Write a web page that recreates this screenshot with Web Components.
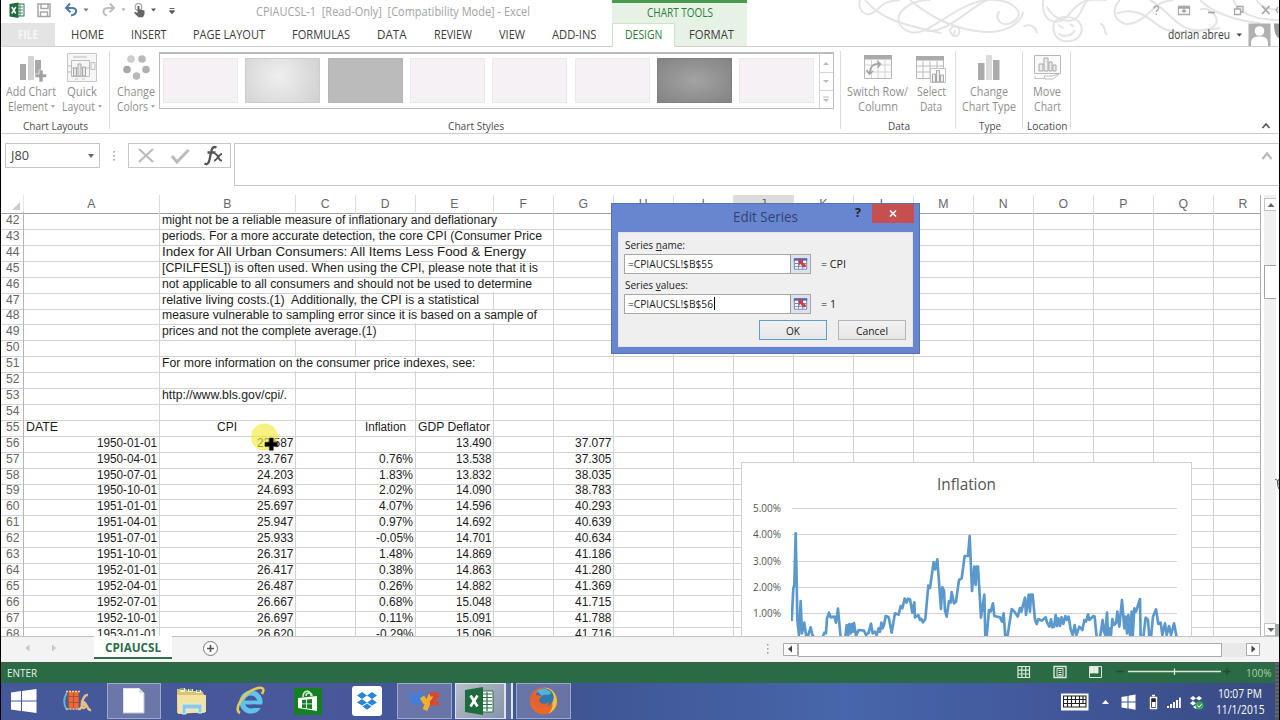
<!DOCTYPE html>
<html lang="en">
<head>
<meta charset="utf-8">
<title>CPIAUCSL-1 - Excel</title>
<style>
html,body{margin:0;padding:0;width:1280px;height:720px;overflow:hidden;background:#fff}
</style>
</head>
<body>
<excel-desktop></excel-desktop>
<script>
const define = (name, css, html, after) => {
  customElements.define(name, class extends HTMLElement {
    connectedCallback() {
      if (this.shadowRoot) return;
      const root = this.attachShadow({mode: 'open'});
      const body = typeof html === 'function' ? html(this) : html;
      root.innerHTML = '<style>*{box-sizing:border-box}' + css + '</style>' + body;
      if (after) after(this, root);
    }
  });
};

/* Text run condensed or widened to a known width */
define('fit-text',
  ':host{display:inline-block;flex:none;white-space:pre;text-align:left}span{display:inline-block;transform-origin:0 50%}',
  '<span><slot></slot></span>',
  (el, root) => {
    const w = parseFloat(el.getAttribute('w'));
    const s = root.querySelector('span');
    const n = s.getBoundingClientRect().width;
    el.style.width = w + 'px';
    if (n) s.style.transform = 'scaleX(' + (w / n) + ')';
  });
const T = (w, s) => `<fit-text w="${w}">${s}</fit-text>`;

/* ---------- title bar ---------- */
define('title-bar', `
:host{display:flex;height:23px;color:#a3a3a3;font-size:12px;line-height:23px;position:relative}
svg{display:block;flex:none}
.title{margin-left:71px}
.tools{margin-left:82px;width:135px;height:23px;background:#e5f2e4;border-top:3px solid #4a9a4e;color:#2e7a3c;line-height:19px;display:flex;justify-content:center}
.win{margin-left:398px}
`, `
<svg width="184" height="23" viewBox="1 0 184 23">
 <rect x="14" y="4" width="10" height="12" fill="#fff" stroke="#2d7447"/><path d="M17 7h6M17 10h6M17 13h6M20 4v12" stroke="#2d7447" stroke-width=".8"/>
 <path d="M9.500 4l9-1.400v15.300l-9-1.400z" fill="#1f6b3e"/><path d="M11.800 7l4 6.500M15.800 7l-4 6.500" stroke="#fff" stroke-width="1.500"/>
 <g fill="none" stroke="#a6a6a6" stroke-width="1.500"><path d="M38 4h12v12.500H38zM41 4v4.500h7V4M40.500 16v-4h7v4"/></g>
 <path d="M70 3.500L66 8l4.500 4.200M66.500 8H72c6 0 5.500 6.500-1 7.500" fill="none" stroke="#4a7aa5" stroke-width="2"/>
 <path d="M83.500 8.500h5l-2.500 3z" fill="#777"/>
 <path d="M110 3.500l4 4.500-4.500 4.200M113.500 8H108c-6 0-5.500 6.500-1 7.500" fill="none" stroke="#bdbdbd" stroke-width="2"/>
 <path d="M121.500 8.500h4l-2 2.500z" fill="#aaa"/>
 <circle cx="138.500" cy="7" r="3.300" fill="none" stroke="#aaa" stroke-width="1.300"/>
 <path d="M137.500 6v7l-3-1.500v2l4 3.800h4.500l1.500-3v-3.800l-5-1V6z" fill="#666"/>
 <path d="M151 8.500h5l-2.500 3z" fill="#555"/>
 <path d="M169.500 8.500h5M169.500 10.800h5l-2.500 3z" fill="#555" stroke="#555" stroke-width=".9"/>
</svg>
<span class="title">${T(274, 'CPIAUCSL-1  [Read-Only]  [Compatibility Mode] - Excel')}</span>
<span class="tools">${T(66, 'CHART TOOLS')}</span>
<svg class="win" width="134" height="23" viewBox="1145 0 134 23" fill="none" stroke="#a8a8a8" stroke-width="1.300">
 <path d="M1154 8.500c0-3.500 5-3 4.500 0-.3 1.700-2.200 1.800-2.200 3.500M1156.300 13.500v1.500" stroke-width="1.500"/>
 <path d="M1178.500 6.500h11v8h-11zM1178.500 8h11M1184 13V9.500M1182 11.500l2-2 2 2"/>
 <path d="M1208 12.500h7" stroke-width="1.800"/>
 <path d="M1234.500 9h6v5.500h-6zM1237 9V6.500h6v5.500h-2.500"/>
 <path d="M1262 6l7.500 8M1269.500 6l-7.500 8" stroke-width="1.800"/><path d="M1278 7l-2 3 2 3"/>
</svg>`);

/* ---------- ribbon tabs ---------- */
define('ribbon-tabs', `
:host{display:flex;height:24px;border-bottom:1px solid #cfcfcf;font-size:12px;line-height:24px;color:#3c3c3c;position:relative}
.file{width:54px;background:#e4e4e4;color:#f7f7f7;text-align:center;font-weight:bold;height:23px}
.tabs{display:flex;gap:27px;margin-left:16px;width:541px}
.design{width:63px;height:24px;background:#fff;border:1px solid #cde3cc;border-bottom:0;color:#2e7a3c;line-height:22px;text-align:center;margin-left:1px}
.format{width:72px;height:23px;background:#e5f2e4;text-align:center}
.user{margin-left:421px}
svg{display:block;flex:none}
.avatar{margin-left:4px}
`, `
<span class="file">${T(20, 'FILE')}</span>
<span class="tabs">${[['HOME',33],['INSERT',35.500],['PAGE LAYOUT',72],['FORMULAS',58],['DATA',29.500],['REVIEW',38],['VIEW',26],['ADD-INS',44.500]].map(a => T(a[1], a[0])).join('')}</span>
<span class="design">${T(37.5, 'DESIGN')}</span><span class="format">${T(45, 'FORMAT')}</span>
<span class="user">${T(62, 'dorian abreu')}</span>
<svg class="avatar" width="45" height="23" viewBox="1234 23 45 23"><path d="M1236.500 33.500h5.500l-2.700 3z" fill="#444"/><rect x="1248.500" y="23.500" width="22" height="22.500" fill="#b0b0b0"/><circle cx="1259.500" cy="31" r="4.800" fill="#fff"/><path d="M1251 46v-3c0-5 3-6.500 8.500-6.500s8.500 1.500 8.500 6.500v3z" fill="#fff"/><path d="M1274 23.500h5V38c-3-1-5-6-5-14.500z" fill="#999"/></svg>`);

/* ---------- ribbon ---------- */
define('ribbon-button', `
:host{display:flex;flex-direction:column;align-items:center;flex:none;color:#8f8f8f;font-size:12px;line-height:16px}
svg{display:block;width:36px;height:32px}
.l{height:15px;display:flex;align-items:center}
.l i{border:3px solid transparent;border-top-color:#aaa;border-bottom:0;border-left-width:2.500px;border-right-width:2.500px;margin-left:3px}
`, el => {
  const [a, aw, b, bw] = el.getAttribute('lines').split('|');
  return `<svg viewBox="0 0 36 32">${icons[el.getAttribute('icon')]}</svg><span class="l">${T(aw, a)}</span><span class="l">${T(bw, b)}${el.hasAttribute('menu') ? '<i></i>' : ''}</span>`;
}, el => { el.style.width = el.getAttribute('width') + 'px'; });

const icons = {
  add: '<path d="M7 12h6v16H7z" fill="#a8a8a8"/><path d="M15 4h6v24h-6z" fill="#d2d2d2"/><path d="M22 8h6v14h-6z" fill="#a8a8a8"/><path d="M26 18h4v4h3.500v3.500H30V30h-4v-4.500h-4V22h4z" fill="#a2a2a2" stroke="#fff" stroke-width=".6"/>',
  quick: '<path d="M3.500 1.500h29v28h-29z" fill="#f6f6f6" stroke="#c8c8c8"/><path d="M9 5h14" stroke="#bbb"/><path d="M7.500 8.500h18v16h-18zM27 10.500h4v7h-4zM4 14h3M4 20h3M8 16h17" fill="none" stroke="#bcbcbc"/><path d="M11 27h3M18 27h3" stroke="#c8c8c8"/><path d="M9.500 16h3v8h-3zM14 12h3v12h-3zM18.500 15h3v9h-3z" fill="#e8e8e8" stroke="#a8a8a8"/>',
  colors: '<circle cx="13" cy="7" r="3.800" fill="#cdcdcd"/><circle cx="24" cy="7" r="3.800" fill="#b8b8b8"/><circle cx="9" cy="17.500" r="3.800" fill="#a8a8a8"/><circle cx="28" cy="17.500" r="3.800" fill="#b0b0b0"/><circle cx="18.500" cy="24" r="3.800" fill="#b8b8b8"/>',
  sw: '<path d="M4.500 3.500h27v23h-27z" fill="#fbfbfb" stroke="#b8b8b8"/><path d="M4 3h28v4.500H4z" fill="#aaa"/><path d="M5 13h26M5 20h26M11.500 8v18M18 8v18M25 8v18" stroke="#d3d3d3"/><path d="M17 9l3.500 3-3 3.500M20 12c-7-1-10 3-10.500 9M6.500 18l3 4 3.500-3" fill="none" stroke="#a2a2a2" stroke-width="1.600"/>',
  select: '<path d="M3.500 4.500h27v22h-27z" fill="#fbfbfb" stroke="#b8b8b8"/><path d="M3 4h28v4.500H3z" fill="#aaa"/><path d="M4 14h26M4 20h26M10 9v17M17 9v17M24 9v17" stroke="#bdbdbd"/><path d="M17.500 16.500h15v14h-15z" fill="#fff" stroke="#c4c4c4"/><path d="M19.500 22h3v8h-3zM23.500 18.500h3V30h-3zM27.500 23h3v7h-3z" fill="#eee" stroke="#a8a8a8"/>',
  type: '<path d="M7 11h6.500v17H7z" fill="#ababab"/><path d="M15 3h6v25h-6z" fill="#dcdcdc"/><path d="M22 8h6.500v20H22z" fill="#ababab"/>',
  move: '<path d="M5.500 3.500h26v18h-26z" fill="#fafafa" stroke="#b8b8b8"/><path d="M10 12h4v7h-4zM15 6h4v13h-4zM20 10h3v9h-3zM24 13h3v6h-3z" fill="#eee" stroke="#aaa"/><path d="M6 24v2.500h9M15 24h8l7-2-6 5h-8z" fill="#fff" stroke="#bdbdbd"/>'
};

define('ribbon-group', `
:host{display:flex;flex-direction:column;flex:none;position:relative}
:host::after{content:"";position:absolute;right:0;top:4px;height:78px;width:1px;background:#dedede}
.items{display:flex;height:71px;padding-top:5px}
.label{font-size:11px;line-height:15px;text-align:center;color:#4c4c4c;height:15px}
`, el => `<div class="items"><slot></slot></div><div class="label">${T(el.getAttribute('lw'), el.getAttribute('label'))}</div>`,
el => { el.style.width = el.getAttribute('width') + 'px'; });

define('style-gallery', `
:host{display:flex;width:675px;height:57px;border:1px solid #bcbcbc;border-top-width:2px;padding:4px 0 0 3px;margin-left:-2px}
.t{display:flex;gap:7.350px;width:658px}
i{width:75px;height:45px;background:#f5f1f4;border:1px solid #ece9eb;flex:none}
.r{background:radial-gradient(circle at 45% 40%,#efefef,#d0d0d0);border-color:#ccc}.g{background:#bbb;border-color:#b4b4b4}.d{background:radial-gradient(#a3a3a3,#838383);border-color:#808080}
svg{width:14px;height:54px;margin-top:-4px;display:block;flex:none}
`, `<span class="t"><i></i><i class="r"></i><i class="g"></i><i></i><i></i><i></i><i class="d"></i><i></i></span>
<svg viewBox="0 0 14 54"><path d="M.5 0v54M0 18.500h14M0 36.500h14" stroke="#d4d4d4" fill="none"/><path d="M4 11l3-3 3 3zM4 26l3 3 3-3zM4 45l3 3 3-3z" fill="#bbb"/><path d="M4 43h6" stroke="#bbb"/></svg>`);

define('excel-ribbon', `
:host{display:flex;height:87px;border-bottom:1px solid #cfcfcf}
.c{margin-left:190px;width:10px}
`, `
<ribbon-group width="109" label="Chart Layouts" lw="65"><ribbon-button width="60" icon="add" lines="Add Chart|50|Element|40" menu></ribbon-button><ribbon-button width="42" icon="quick" lines="Quick|30|Layout|33" menu></ribbon-button></ribbon-group>
<ribbon-group width="731" label="Chart Styles" lw="56"><ribbon-button width="51" icon="colors" lines="Change|38|Colors|31" menu></ribbon-button><style-gallery></style-gallery></ribbon-group>
<ribbon-group width="115" label="Data" lw="22"><ribbon-button width="73" icon="sw" lines="Switch Row/|61|Column|40"></ribbon-button><ribbon-button width="34" icon="select" lines="Select|29|Data|22"></ribbon-button></ribbon-group>
<ribbon-group width="67" label="Type" lw="22"><ribbon-button width="66" icon="type" lines="Change|38|Chart Type|54"></ribbon-button></ribbon-group>
<ribbon-group width="48" label="Location" lw="40.5"><ribbon-button width="48" icon="move" lines="Move|28|Chart|27"></ribbon-button></ribbon-group>
<svg class="c" width="10" height="87" viewBox="0 0 10 87"><path d="M1.500 81l3.500-4 3.500 4" fill="none" stroke="#555" stroke-width="1.700"/></svg>`);

/* ---------- formula bar ---------- */
define('formula-bar', `
:host{display:flex;height:61px;padding:9px 0 0 4px;font-size:12px;color:#444}
.name{width:95px;height:25px;border:1px solid #c6c6c6;padding:0 5px 0 5px;display:flex;align-items:center;justify-content:space-between}
.name i{border:3.500px solid transparent;border-top:4px solid #666;border-bottom:0;margin-right:0}
.fx{width:103px;height:25px;border:1px solid #c6c6c6}
.in{flex:1;height:43px;border:1px solid #c6c6c6;border-right:0;margin-left:3px;display:flex;justify-content:flex-end}
svg{display:block;flex:none}
`, `<span class="name">${T(18, 'J80')}<i></i></span>
<svg width="28" height="25" viewBox="0 0 28 25" fill="#999"><path d="M13.300 8h1.500v1.500h-1.500zM13.300 12h1.500v1.500h-1.500zM13.300 16h1.500v1.500h-1.500z"/></svg>
<span class="fx"><svg width="101" height="23" viewBox="0 0 101 23" fill="none"><path d="M10 5l14 13M24 5L10 18" stroke="#bbb" stroke-width="2.200"/><path d="M43 12l5 6L59.500 6" stroke="#bbb" stroke-width="3"/><path d="M87.500 3.500c-4-2-5 2-6 7.500s-2 11-6 8.500M78.500 8.500h8" stroke="#555" stroke-width="2.300"/><path d="M85.500 10c4-1.500 3 7.500 7.500 6.500M93 10c-3-.5-5 7-8 6.500" stroke="#555" stroke-width="1.900"/></svg></span>
<span class="in"><svg width="18" height="25" viewBox="0 0 18 25"><path d="M1.500 15L6 9.500l4.500 5.500" fill="none" stroke="#bbb" stroke-width="2.400"/></svg></span>`);

/* ---------- sheet ---------- */
const cols = [23,136,136,60,60,78,60,60,60,60,60,60,60,60,60,60,60,60,46];
const prose = {
  42: ['might not be a reliable measure of inflationary and deflationary', 335, 5],
  43: ['periods. For a more accurate detection, the core CPI (Consumer Price', 380, 5],
  44: ['Index for All Urban Consumers: All Items Less Food &amp; Energy', 364, 5],
  45: ['[CPILFESL]) is often used. When using the CPI, please note that it is', 376, 5],
  46: ['not applicable to all consumers and should not be used to determine', 370, 5],
  47: ['relative living costs.(1)  Additionally, the CPI is a statistical', 317, 4],
  48: ['measure vulnerable to sampling error since it is based on a sample of', 375, 5],
  49: ['prices and not the complete average.(1)', 214.5, 3],
  51: ['For more information on the consumer price indexes, see:', 313.500, 4],
  53: ['http://www.bls.gov/cpi/.', 125, 1]
};
const data = `1950-01-01,23.587,,13.490,37.077
1950-04-01,23.767,0.76%,13.538,37.305
1950-07-01,24.203,1.83%,13.832,38.035
1950-10-01,24.693,2.02%,14.090,38.783
1951-01-01,25.697,4.07%,14.596,40.293
1951-04-01,25.947,0.97%,14.692,40.639
1951-07-01,25.933,-0.05%,14.701,40.634
1951-10-01,26.317,1.48%,14.869,41.186
1952-01-01,26.417,0.38%,14.863,41.280
1952-04-01,26.487,0.26%,14.882,41.369
1952-07-01,26.667,0.68%,15.048,41.715
1952-10-01,26.697,0.11%,15.091,41.788
1953-01-01,26.620,-0.29%,15.096,41.716`.split('\n').map(r => r.split(','));

define('sheet-grid', `
:host{display:block;width:1260px;height:441px;overflow:hidden;font-family:"Liberation Sans",Arial,sans-serif;font-size:12.300px;color:#1c1c1c;border-right:1px solid #b0b0b0}
.row{display:grid;grid-template-columns:${cols.map(c => c + 'px').join(' ')};height:15.920px;line-height:17px}
.row>*{border-right:1px solid #d3d3d3;border-bottom:1px solid #d3d3d3;height:100%;padding:0 2px 0 1.500px;text-align:right;min-width:0;white-space:nowrap}
.row>.n{border-right-color:#b5b5b5;color:#666;text-align:center;padding:0 0 0 1px}
.row>.l{text-align:left}
.row>.c{text-align:center}
.row>*:last-child{border-right:0}
.head{height:17px;margin-bottom:0;line-height:18px}
.head>*{text-align:center;color:#666;border-bottom:1px solid #a0a0a0;border-right-color:#dedede}
.head>*:last-child{padding-left:14px}
.head>.n{border-right-color:#e6e6e6;display:flex;justify-content:flex-end;align-items:flex-end;padding:0 3px 3px 0}
.n b{border:4px solid transparent;border-right-color:#ccc;border-bottom-color:#ccc}
.head>.j{background:#dcdcdc;border-bottom-color:#777}
`, () => {
  const cell = (t, w, c = '', st = '') => `<span class="${c}" style="${st}">${t ? T(w, t) : ''}</span>`;
  let h = '<div class="row head"><span class="n"><b></b></span>' + 'ABCDEFGHIJKLMNOPQR'.split('').map(c => `<span class="${c === 'J' ? 'j' : ''}">${c}</span>`).join('') + '</div>';
  for (let r = 42; r <= 68; r++) {
    h += '<div class="row">' + cell('' + r, 13.5, 'n');
    let n = 18;
    if (prose[r]) {
      const [t, w, span] = prose[r];
      h += cell('') + cell(t, w, 'l', `grid-column:span ${span}`);
      n -= 1 + span;
    } else if (r === 55) {
      h += cell('DATE', 32, 'l') + cell('CPI', 20, 'c') + cell('') + cell('Inflation', 41, 'c') + cell('GDP Deflator', 72, 'l');
      n -= 5;
    } else if (r >= 56) {
      const d = data[r - 56];
      h += cell(d[0], 60) + cell(d[1], 36.500) + cell('') + cell(d[2], d[2][0] === '-' ? 37.500 : 34) + cell(d[3], 35.500) + cell('') + cell(d[4], 36.500);
      n -= 7;
    }
    for (let i = 0; i < n; i++) h += cell('');
    h += '</div>';
  }
  return h;
});

define('v-scroll', `
:host{display:flex;flex-direction:column;width:12px;height:441px;margin-left:3px;background:#f0f0f0}
svg{display:block;width:12px;height:13px;flex:none;background:#fff;border:1px solid #c4c4c4;border-right:0}
.thumb{height:34px;margin-top:54px;border:1px solid #a5a5a5;border-right:0;background:#fff}
.sp{flex:1}
svg:first-of-type{margin-top:3px}
`, `<svg viewBox="0 0 11 11"><path d="M2.500 8l3.500-4 3.500 4z" fill="#666"/></svg><span class="thumb"></span><span class="sp"></span><svg viewBox="0 0 11 11"><path d="M2.500 4l3.500 4 3.500-4z" fill="#666"/></svg>`);

define('inflation-chart', `
:host{display:block;position:absolute;left:740px;top:267px;width:451px;height:174px;overflow:hidden;border:1px solid #d0d0d0;border-bottom:0;background:#fff;color:#555}
.title{display:flex;justify-content:center;font-size:16px;line-height:22px;padding-top:10px;height:32px}
.plot{display:grid;grid-template-columns:49px 1fr}
.axis{font-size:11.500px;line-height:26.300px;text-align:right;padding-right:10px;display:flex;flex-direction:column;align-items:flex-end}
.axis fit-text{height:26.300px}
svg{display:block}
`, `<div class="title">${T(59, 'Inflation')}</div>
<div class="plot"><div class="axis">${['5.00%','4.00%','3.00%','2.00%','1.00%'].map(t => T(28, t)).join('')}</div>
<svg width="400" height="142" viewBox="791 495 400 142"><path d="M792 508.500h385M792 534.500h385M792 561.500h385M792 587.500h385M792 613.500h385" stroke="#d4d4d4"/>
<g transform="translate(780 520) scale(.33333)"><polyline fill="none" stroke="#5b99cc" stroke-width="8" stroke-linejoin="round" points="35,303 40,205 43,195 47,40 50,180 52,300 57,345 62,243 66,340 73,308 78,345 84,348 92,322 97,345 103,352 128,352 133,338 138,340 141,295 147,278 152,292 163,290 168,308 174,266 178,310 182,352 196,352 200,315 205,345 208,312 212,340 216,312 219,335 222,309 228,348 236,330 252,332 258,345 266,338 273,311 278,340 284,335 290,345 296,325 300,335 304,308 308,325 312,315 317,288 326,292 335,338 345,280 356,284 362,258 367,265 374,236 380,248 384,236 390,238 397,278 403,247 405,292 415,285 420,300 424,297 429,307 436,297 445,197 450,204 461,126 466,148 472,118 483,267 487,202 492,212 495,272 500,290 507,243 512,248 515,216 522,250 528,245 537,180 545,175 554,108 564,108 569,48 576,213 583,140 587,195 590,140 594,140 603,293 613,224 616,352 620,352 627,270 632,275 639,250 643,288 660,292 666,305 671,280 676,352 682,352 690,300 695,267 705,277 713,290 720,264 724,275 735,233 738,285 746,224 750,275 753,224 758,224 765,300 770,312 775,297 785,302 797,292 801,307 808,320 813,298 817,322 822,320 827,285 831,318 835,295 840,318 845,292 850,312 856,288 860,300 866,290 872,328 878,345 884,315 889,345 898,320 907,330 913,300 918,305 924,283 928,300 940,288 944,290 950,352 960,352 968,300 972,335 976,345 981,278 984,348 990,325 993,345 997,297 1002,315 1008,310 1012,275 1018,320 1026,240 1033,325 1037,290 1041,340 1045,285 1050,345 1055,275 1058,352 1063,265 1068,275 1080,237 1082,352 1090,352 1097,293 1104,300 1108,352 1113,352 1119,290 1128,268 1135,312 1142,308 1147,345 1155,310 1160,345 1167,318 1173,345 1182,310 1190,352"/></g></svg></div>`);

define('mouse-cursor', `
:host{display:block;position:absolute;left:249px;top:227px;width:32px;height:32px}
svg{display:block}
`, `<svg width="32" height="32" viewBox="250 422 32 32"><circle cx="264.500" cy="437" r="13.500" fill="#f1e832" opacity=".62"/><path d="M269.300 438h4v4.300h4.200v4h-4.200v4h-4v-4H265v-4h4.300z" fill="#000" stroke="#333" stroke-width=".6"/></svg>`);

define('work-area', `:host{display:flex;height:441px;position:relative;overflow:hidden}`,
`<sheet-grid></sheet-grid><v-scroll></v-scroll><inflation-chart></inflation-chart><mouse-cursor></mouse-cursor>`);

/* ---------- sheet tabs ---------- */
define('sheet-tabs', `
:host{display:flex;height:26px;background:#f3f3f3;border-top:1px solid #c2c2c2}
svg{display:block;flex:none}
.tab{width:78px;height:23px;background:#fff;border-bottom:2px solid #2f7048;color:#2b6e46;font-weight:bold;font-size:12.500px;line-height:23px;display:flex;justify-content:center;margin-top:-1px}
.bar{width:424px;height:14px;border:1px solid #ababab;background:#fff;margin-top:6px}
.gap{width:24px;height:14px;background:#e9e9e9;margin-top:6px}
`, `
<svg width="93" height="25" viewBox="1 637 93 25" fill="#c6c6c6"><path d="M29.500 644.500v7l-4-3.500zM52 644.500v7l4-3.500z"/></svg>
<span class="tab">${T(56, 'CPIAUCSL')}</span>
<svg width="611" height="25" viewBox="172 637 611 25"><circle cx="210.500" cy="648.500" r="7" fill="#fff" stroke="#777"/><path d="M207 648.500h7M210.500 645v7" stroke="#555" stroke-width="1.600"/><path d="M767 644h1.500v1.500H767zM767 648h1.500v1.500H767zM767 652h1.500v1.500H767z" fill="#999"/></svg>
<svg width="15" height="25" viewBox="783 637 15 25"><path d="M783.500 643.500h14v12h-14z" fill="#fff" stroke="#ababab"/><path d="M792 645.500v7l-4-3.500z" fill="#444"/></svg>
<span class="bar"></span><span class="gap"></span>
<svg width="15" height="25" viewBox="1246 637 15 25"><path d="M1246.500 643.500h13v12h-13z" fill="#fff" stroke="#ababab"/><path d="M1251.500 645.500v7l4-3.500z" fill="#444"/></svg>`);

/* ---------- status bar ---------- */
define('status-bar', `
:host{display:flex;height:21px;background:#2a6a45;border-top:1px solid #3d5a4a;color:#e8f2ea;font-size:11.500px;line-height:19px;padding-left:6px}
svg{display:block;margin-left:973px;flex:none}
.z{color:#a9d4a4;margin-left:6px}
`, `${T(30, 'ENTER')}
<svg width="230" height="20" viewBox="1010 663 230 20" fill="none" stroke="#d9ead8">
<path d="M1018 666.500h11.500v11H1018zM1018 670.200h11.500M1018 674h11.500M1021.800 666.500v11M1025.700 666.500v11" stroke-width="1.200"/>
<path d="M1054 666.500h12v11h-12z" stroke-width="1.400"/><path d="M1057 668.500h6v7.500h-6zM1058.500 670.500h3M1058.500 672.500h3M1058.500 674.500h3"/>
<path d="M1089.500 666.500h12v11h-12z"/><path d="M1090 667h3.500v6H1090zM1094.500 667h3.500v6h-3.500z" fill="#e8f2ea"/>
<path d="M1128 671.500h93M1174.500 668.500v6.500" stroke-width="1.300"/><path d="M1116.500 671.500h7M1223.500 671.500h7M1227 668v7" stroke="#1d4d31" stroke-width="1.500"/></svg>
<span class="z">${T(25.5, '100%')}</span>`);

/* ---------- taskbar ---------- */
define('task-item', `
:host{display:flex;flex:none;height:36px;align-items:center;justify-content:center}
:host([open]){background:rgba(160,160,190,.42);border:1px solid rgba(195,200,225,.6)}
:host([active]){background:linear-gradient(135deg,#b6c0ca,#8793aa);border:1px solid #dce2ea}
`, '<slot></slot>', el => { el.style.width = el.getAttribute('width') + 'px'; });

define('task-bar', `
:host{display:flex;height:37px;background:linear-gradient(90deg,#44589a,#47589b 25%,#3f5594 45%,#4766ab 66%,#43599d 80%,#384a82);color:#fff;font-size:12px;position:relative}
svg{display:block}
.stack{width:8px;height:36px;border:solid #dfe5ee;border-width:0 2px 0 1px;background:#5d6d9c;margin-right:3px}
.sp{flex:1}
.clock{width:62px;display:flex;flex-direction:column;align-items:center;line-height:16px;padding-top:3px;margin-right:8px}
`, `
<task-item width="45"><svg width="26" height="24" viewBox="0 0 26 24" fill="#fff"><path d="M0 3.500L10 2v9.500H0zM11 1.900L25.500 0v11.500H11zM0 12.500h10V22L0 20.500zM11 12.500h14.500V24L11 22.100z"/></svg></task-item>
<task-item width="61"><svg width="30" height="26" viewBox="0 0 30 26"><path d="M6 3Q-1 13 5 22" fill="none" stroke="#58b6d4" stroke-width="2"/><path d="M5 3h12v18H6z" fill="#a85038"/><path d="M7 4l4-.5V8H7zM12 3.500h4.500V8H12zM7 9h4v5H7zM12 9h4.500v5H12zM7 15h4v5H7zM12 15h4.500v5H12z" fill="#ee6a35"/><path d="M4 3.500h14M4.500 21h14" stroke="#f0d0b0" stroke-width="1.500" stroke-dasharray="2 1"/><path d="M26 7c-5-1-9 14-4 13 2-1 0-5-1-6 4 0 4 9 8 8M16 21c3 1 5-4 5-8" fill="none" stroke="#e5bf8c" stroke-width="2.400"/></svg></task-item>
<task-item width="54" open><svg width="22" height="26" viewBox="0 0 22 26"><path d="M0 0h16l5 5v20H0z" fill="#fff" stroke="#c2c5d0"/><path d="M16 0v5h5" fill="#ddd"/></svg></task-item>
<task-item width="61"><svg width="31" height="28" viewBox="0 0 31 28"><path d="M1 2h9l2 2h14l3 5v17H1z" fill="#dcc276"/><path d="M4 1h5v4H4zM12 2h5v3h-5zM20 3h5v3h-5z" fill="#eef0d2"/><path d="M4 2h4M13 3h3M21 4h3" stroke="#4c9a57" stroke-width="1.500"/><path d="M1 8h29v17l-28 2z" fill="#f3e3a2"/><path d="M6 17h20v9h-4v-4H10v5H6z" fill="#8ecae4" stroke="#d8f0fa"/></svg></task-item>
<task-item width="57"><svg width="32" height="30" viewBox="0 0 32 30"><circle cx="16" cy="16" r="9" fill="none" stroke="#62c2ee" stroke-width="5"/><path d="M8 16.500h17" stroke="#62c2ee" stroke-width="4"/><path d="M17 18.500h13v3.500H17z" fill="#46589a"/><path d="M5 27C-2 24 8 7 20 3c8-3 10 0 7 5" fill="none" stroke="#e6ca50" stroke-width="2.600"/></svg></task-item>
<task-item width="58"><svg width="28" height="29" viewBox="0 0 28 29"><path d="M0 1h28v27H0z" fill="#148022"/><path d="M4 11l19-2v15L4 21z" fill="#fff"/><path d="M9 10c0-7 8-8 8-1M12 9c0-4 6-4 6 0" fill="none" stroke="#d9ecd9" stroke-width="1.500"/><path d="M8 13l4-.5v4H8zM13 12.400l5-.5v4.600h-5zM8 17.300h4v4l-4-.5zM13 17.300h5v4.600l-5-.5z" fill="#148022"/></svg></task-item>
<task-item width="60"><svg width="30" height="30" viewBox="0 0 30 30"><rect width="30" height="30" rx="3" fill="#fff"/><g fill="#2b83d8"><path d="M10 6l5 3.500-5 3.500-5-3.500zM20 6l5 3.500-5 3.500-5-3.500zM10 13l5 3.500-5 3-5-3zM20 13l5 3.500-5 3-5-3zM15 17.500l4.500 3-4.500 3.300-4.500-3.300z"/></g><path d="M15 9.800l4.600 3.200-4.600 3.200-4.600-3.200z" fill="#fff"/></svg></task-item>
<task-item width="55" open><svg width="32" height="22" viewBox="0 0 32 22" fill="none" stroke-width="5"><path d="M2 3l4 11M11 2L7 15" stroke="#3f7fe0"/><path d="M13 7l4 6M22 5l-6 15" stroke="#f4b02c"/><path d="M21 4.500h9M21 13.500h9M29 5l-7 8" stroke="#d9492e" stroke-width="4"/></svg></task-item>
<task-item width="50" active style="margin-left:3px"><svg width="30" height="28" viewBox="0 0 30 28"><path d="M15 4h13v21H15z" fill="#fff" stroke="#2b7045"/><path d="M17 7h10M17 10.500h10M17 14h10M17 17.500h10M17 21h10M22 5v19" stroke="#2b7045" stroke-width="1.200"/><path d="M0 3l18-3v28L0 25z" fill="#1f6b3e"/><path d="M5.500 8.500l7 11M12.500 8.500l-7 11" stroke="#fff" stroke-width="2.600"/></svg></task-item>
<span class="stack"></span>
<task-item width="55" open><svg width="29" height="30" viewBox="0 0 29 30"><circle cx="14.500" cy="15" r="13.500" fill="#e8682b"/><path d="M14 2c8-2 14 6 14 13 0 6-4 11-9 13 5-5 5-9 4-14z" fill="#f5c13a"/><circle cx="15.500" cy="11.500" r="9.200" fill="#2e78b4"/><path d="M8 5c5-4 12-2 14 2-3 4-6 0-9 3z" fill="#58b0d4"/><path d="M2 8l3-3 2 4 6 1-3 4c1 4 5 5 10 2-1 6-7 8-12 5-4-2-7-8-6-13z" fill="#e8602b"/></svg></task-item>
<span class="sp"></span>
<svg width="154" height="37" viewBox="1051 683 154 37"><path d="M1057 693.500h27.500v17H1057z" fill="#fff"/><path d="M1059.500 696h22.500v11h-22.500zM1059.500 699.500h22.500M1059.500 703.500h22.500M1063.500 696v11M1067.500 696v11M1071.500 696v7M1075.500 696v11M1079 696v7" fill="none" stroke="#222" stroke-width="1.100"/><path d="M1098 704l3.500-4 3.500 4z" fill="#fff"/><path d="M1117.500 697l6-1v5.500h-6zM1124.500 695.800l7-1.200v6.900h-7zM1117.500 702.500h6v6l-6-1zM1124.500 702.500h7v7.300l-7-1.200z" fill="#fff"/><path d="M1146.500 697.500h6v11h-6zM1148 695.500h3" fill="#222" stroke="#fff" stroke-width="1.400"/><path d="M1148 702h3.500v5h-3.500z" fill="#fff"/><path d="M1163 706h2v2h-2zM1166 704h2v4h-2zM1169 702h2v6h-2zM1172 700h2v8h-2zM1175 697.500h1.800V708h-1.800z" fill="#fff"/><path d="M1189 696l3 2.300-3 2.300-3-2.300zM1195 696l3 2.300-3 2.300-3-2.300zM1189 701l3 2.300-3 2.300-3-2.300zM1192 705l3 2-3 2-3-2z" fill="#fff"/><circle cx="1195.500" cy="705.500" r="4" fill="#3aa655"/><path d="M1193.500 705.500l1.500 1.700 2.700-3" fill="none" stroke="#fff"/></svg>
<span class="clock">${T(44, '10:07 PM')}${T(48.5, '11/1/2015')}</span>`);

/* ---------- dialog ---------- */
define('range-field', `
:host{display:grid;grid-template-columns:187px auto;column-gap:10px;font-size:11.500px;color:#222}
.label{grid-column:1/3;line-height:17px;height:18px;padding-left:1px}
u{text-underline-offset:1px}
.box{display:flex;height:20px;border:1px solid #a8a8a8;background:#fff;line-height:17px;padding-left:3px}
.box svg{display:block;margin-left:auto;width:20px;height:18px;border-left:1px solid #999;background:#dfe2ec}
.caret{width:1px;height:13px;background:#000;margin:2px 0 0 1px}
.res{line-height:19px}
`, el => `<span class="label"><slot></slot></span><span class="box">${T(el.getAttribute('vw'), el.getAttribute('value'))}${el.hasAttribute('focus') ? '<span class="caret"></span>' : ''}<svg viewBox="0 0 20 18"><path d="M3.500 3.500h13v11h-13z" fill="#fff" stroke="#7181b4"/><path d="M3 3h14v2.500H3z" fill="#5469ad"/><path d="M4 8.500h12M4 11.500h12M8 5v9M12 5v9" stroke="#7181b4"/><path d="M8 4l5 1-1 1.500 4 4-2.500 2.500-3.500-4-1.500 1.500z" fill="#cf3b42"/></svg></span><span class="res">${T(el.getAttribute('rw'), el.getAttribute('result'))}</span>`);

define('edit-series-dialog', `
:host{display:block;position:absolute;left:611px;top:203px;width:309px;height:151px;background:#6786cf;border:1px solid #5471b5;font-size:11.500px}
.bar{display:flex;height:28px;padding-left:121px;font-size:14.500px;line-height:26px;color:#33436f}
.q{margin-left:57px;font-size:12.500px;font-weight:bold;color:#222;line-height:18px}
.x{display:block;width:42px;height:19px;background:#c6504f;margin:0 0 0 11px}
.body{margin:0 6px;height:115px;background:#efefef;border:1px solid #dfe4ef;padding:3px 5px}
range-field+range-field{margin-top:2px}
.btns{display:flex;gap:11px;margin:6px 0 0 135px}
button{font:inherit;line-height:17px;width:68px;height:20px;padding:0;border:1px solid #b5b5b5;background:linear-gradient(#f2f2f2,#e6e6e6);color:#222;display:block}
button.ok{border-color:#5aa0cf}
`, `<div class="bar">${T(65, 'Edit Series')}<span class="q">?</span><svg class="x" viewBox="0 0 42 19"><path d="M18 6.500l6 6M24 6.500l-6 6" stroke="#fff" stroke-width="1.700"/></svg></div>
<div class="body">
<range-field value="=CPIAUCSL!$B$55" vw="85" result="= CPI" rw="25">${T(60, 'Series <u>n</u>ame:')}</range-field>
<range-field value="=CPIAUCSL!$B$56" vw="85" result="= 1" rw="15" focus>${T(63, 'Series <u>v</u>alues:')}</range-field>
<div class="btns"><button class="ok">${T(14, 'OK')}</button><button>${T(32, 'Cancel')}</button></div>
</div>`);

/* ---------- ornaments behind the title bar and window edge ---------- */
define('title-ornament', `:host{display:block;position:absolute;left:840px;top:0;width:440px;height:47px}svg{display:block}`,
`<svg width="440" height="47" viewBox="0 0 1320 141" fill="none" stroke="#e4e4e4" stroke-width="6"><path d="M60 0c-10 30 20 60 50 30S150 5 180 0M75 0c50 60 120 75 230 100"/><path d="M270 0c-70 0-120 50-80 85s90-10 140-40S420-5 470 0s90 40 50 65-60-20-40-30"/><path d="M210 0c60 50 130 90 220 95 60 5 110-20 120-60"/><path d="M250 90c60 20 130-60 190-90M330 90c5-15 30-15 28 5s-25 15-28-5zM345 90l-5 20"/><path d="M610 0c-10 60 40 90 80 40s60-40 110-40M640 80c0-40 80-40 85 5s-85 60-85-5zM655 100c10 12 40 10 50-10M655 75l15 10M690 72l12 8"/><path d="M620 20c20 40 80 60 100 20S740 0 750 0M550 80c20-10 40 0 40 20M780 70c20 10 10 20 20 35"/><path d="M840 0c-40 40 0 90 50 65s50-60 110-65M830 40c60-20 90 10 130 40s120 10 180 5"/><path d="M930 0c60 30 80 100 160 90s20-80-10-60M1080 0c40 40 100 60 180 70M1180 0c20 50 90 60 140 60M1250 0c10 20 40 30 70 30"/></svg>`);

define('screen-edge', `:host{display:flex;flex-direction:column;position:absolute;left:1275px;top:477px;width:4px;height:243px}svg{display:block}`,
`<svg width="4" height="243" viewBox="0 0 4 243" fill="none"><path d="M0 2q4 1 3 4t1 6M4 2q-3 3-1 6" stroke="#555"/><path d="M0 147h4v12H0z" fill="#a5acaa"/><path d="M0 185h4v58H0z" fill="#4e5463"/><path d="M0 187h4M0 191h4M0 195h4M0 199h4M0 203h4M0 207h4M0 211h4M0 215h4M0 219h4M0 223h4M0 227h4M0 231h4M0 235h4M0 239h4" stroke="#747985"/></svg>`);

define('excel-desktop', `
:host{display:flex;flex-direction:column;position:relative;width:1280px;height:720px;overflow:hidden;background:#fff;border:solid #000;border-width:0 1px;font-family:"Open Sans","Noto Sans",sans-serif;box-sizing:border-box}
main{display:flex;flex-direction:column;height:720px}
main>*{flex:none}
title-ornament{left:839px}edit-series-dialog{left:610px}screen-edge{left:1274px}
`, `<title-ornament></title-ornament>
<main><title-bar></title-bar><ribbon-tabs></ribbon-tabs><excel-ribbon></excel-ribbon><formula-bar></formula-bar><work-area></work-area><sheet-tabs></sheet-tabs><status-bar></status-bar><task-bar></task-bar></main>
<edit-series-dialog></edit-series-dialog><screen-edge></screen-edge>`);
</script>
</body>
</html>
